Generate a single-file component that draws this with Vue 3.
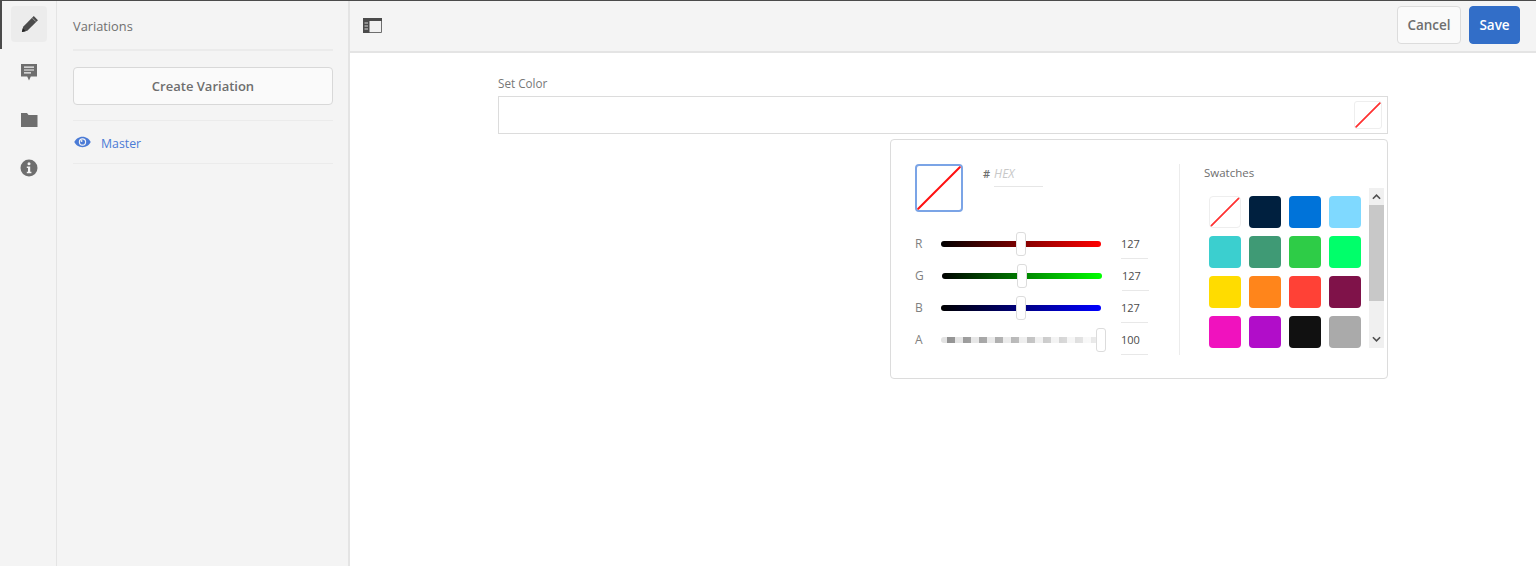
<script setup>
const channels = [
  { label: 'R', value: 127, cls: 'r', pos: 50, nudge: false },
  { label: 'G', value: 127, cls: 'g', pos: 50, nudge: true },
  { label: 'B', value: 127, cls: 'b', pos: 50, nudge: false },
  { label: 'A', value: 100, cls: 'a', pos: 100, nudge: false },
]
const swatches = [
  '', '#00203f', '#0073d9', '#7fd9ff',
  '#3bcfcf', '#3f9a75', '#2ecc47', '#00ff6a',
  '#ffdc00', '#ff851b', '#ff4136', '#7f1249',
  '#f012be', '#b10dc9', '#111111', '#aaaaaa',
]
</script>

<template>
  <div class="app">
    <nav class="rail">
      <div class="rail-item active">
        <svg class="pencil" viewBox="0 0 20 20" width="18" height="18"><path d="M14.2 1.2 18.800 5.800 7 17.600 1 19 2.400 13z" fill="#4b4b4b"/><path d="M12.800 3.600l3.600 3.600" stroke="#ececec" stroke-width=".6"/><path d="M1 19l1-4.200 3.200 3.200z" fill="#222"/></svg>
      </div>
      <div class="rail-item">
        <svg viewBox="0 0 18 18" width="18" height="18"><path d="M1 1h16v12.600h-6.200L9 17.500l-1.800-3.900H1z" fill="#6e6e6e"/><path d="M4 4.200h10M4 7h10M4 9.800h7" stroke="#f4f4f4" stroke-width="1.200"/></svg>
      </div>
      <div class="rail-item">
        <svg viewBox="0 0 18 18" width="18" height="18"><path d="M1 2h6l1.500 2H17.500v12H1z" fill="#6e6e6e"/></svg>
      </div>
      <div class="rail-item">
        <svg viewBox="0 0 18 18" width="18" height="18"><circle cx="9" cy="9" r="8.500" fill="#6e6e6e"/><circle cx="9" cy="4.800" r="1.500" fill="#f4f4f4"/><path d="M6.800 7.400h3.400v5.300h1.200v1.500H6.800v-1.500H8V8.900H6.800z" fill="#f4f4f4"/></svg>
      </div>
    </nav>

    <aside class="side">
      <div class="side-title">Variations</div>
      <div class="side-action">
        <button class="btn create">Create Variation</button>
      </div>
      <div class="variation">
        <svg viewBox="0 0 18 12" width="17" height="12"><path d="M9 .5C5 .5 1.800 3 .3 6c1.500 3 4.700 5.500 8.700 5.500S16.200 9 17.700 6C16.200 3 13 .5 9 .5z" fill="#4b7bd6"/><circle cx="9" cy="6" r="3.900" fill="#f4f4f4"/><circle cx="9" cy="6" r="2.700" fill="#4b7bd6"/><circle cx="8" cy="5" r="1" fill="#f4f4f4"/></svg>
        <span>Master</span>
      </div>
    </aside>

    <main class="main">
      <header class="toolbar">
        <svg class="panel-icon" viewBox="0 0 19 15" width="19" height="15"><path d="M.5.500h18v14H.5z" fill="#f0f0f0" stroke="#6e6e6e"/><path d="M0 0h19v3H0zM0 3h6.500v12H0z" fill="#4b4b4b"/><path d="M1.500 5h3.500M1.500 8h3.500M1.500 11h3.500" stroke="#d8d8d8" stroke-width="1"/></svg>
        <div class="actions">
          <button class="btn cancel">Cancel</button>
          <button class="btn save">Save</button>
        </div>
      </header>

      <section class="form">
        <label class="field-label">Set Color</label>
        <div class="field">
          <span class="swatch-none field-swatch"></span>
        </div>

        <div class="popover">
          <div class="editor">
            <div class="preview-row">
              <span class="preview">
                <svg viewBox="0 0 44 44" width="44" height="44"><path d="M0 44 44 0" stroke="#ff1010" stroke-width="2"/></svg>
              </span>
              <div class="hex">
                <span class="hash">#</span>
                <span class="hex-input">HEX</span>
              </div>
            </div>
            <div class="sliders">
              <div v-for="c in channels" :key="c.label" class="slider-row" :class="{ nudge: c.nudge }">
                <span class="ch-label">{{ c.label }}</span>
                <div class="track-wrap">
                  <div class="track" :class="c.cls"></div>
                  <span class="thumb" :style="{ left: c.pos + '%' }"></span>
                </div>
                <span class="ch-value">{{ c.value }}</span>
              </div>
            </div>
          </div>

          <div class="swatch-panel">
            <div class="swatch-title">Swatches</div>
            <div class="swatch-scroll">
              <div class="swatch-grid">
                <span
                  v-for="(s, i) in swatches"
                  :key="i"
                  class="swatch"
                  :class="{ 'swatch-none': !s }"
                  :style="s ? { background: s } : null"
                ></span>
              </div>
              <div class="scrollbar">
                <svg viewBox="0 0 10 6" width="9" height="6"><path d="M1 5l4-4 4 4" fill="none" stroke="#505050" stroke-width="1.800"/></svg>
                <div class="scroll-thumb"></div>
                <svg class="down" viewBox="0 0 10 6" width="9" height="6"><path d="M1 1l4 4 4-4" fill="none" stroke="#505050" stroke-width="1.800"/></svg>
              </div>
            </div>
          </div>
        </div>
      </section>
    </main>
  </div>
</template>

<style>
html, body { margin: 0; background: #fff; }
</style>

<style scoped>
.app {
  display: flex;
  height: 566px;
  overflow: hidden;
  box-sizing: border-box;
  border-top: 1px solid #4b4b4b;
  font-family: "Open Sans", "Liberation Sans", sans-serif;
  color: #6e6e6e;
  font-size: 12px;
}
.rail {
  width: 57px;
  flex: none;
  box-sizing: border-box;
  background: #f4f4f4;
  border-right: 1px solid #e4e4e4;
  padding: 5px 0 0 11px;
  display: flex;
  flex-direction: column;
  position: relative;
}
.rail::before {
  content: "";
  position: absolute;
  left: 0;
  top: 0;
  width: 2px;
  height: 48px;
  background: #4b4b4b;
}
.rail-item {
  width: 36px;
  height: 36px;
  margin-bottom: 12px;
  border-radius: 4px;
  display: flex;
  align-items: center;
  justify-content: center;
}
.rail-item.active { background: #ececec; }
.pencil { margin-left: 1px; }
.side {
  width: 293px;
  flex: none;
  box-sizing: border-box;
  background: #f4f4f4;
  border-right: 2px solid #e4e4e4;
  padding: 0 15px 0 16px;
}
.side-title {
  height: 48px;
  line-height: 50px;
  border-bottom: 2px solid #ebebeb;
  font-size: 12.800px;
  color: #707070;
}
.side-action {
  padding: 16px 0 15px;
  border-bottom: 1px solid #ebebeb;
}
.btn {
  font-family: inherit;
  font-weight: 600;
  font-size: 13.500px;
  box-sizing: border-box;
  border-radius: 4px;
  cursor: pointer;
  padding: 0;
}
.create {
  display: block;
  width: 100%;
  height: 38px;
  background: #fafafa;
  border: 1px solid #d8d8d8;
  color: #6e6e6e;
  font-size: 13px;
}
.variation {
  height: 42px;
  display: flex;
  align-items: center;
  gap: 10px;
  border-bottom: 1px solid #ebebeb;
  color: #4b7bd6;
  font-size: 12.300px;
  padding-left: 1px;
}
.variation span { padding-top: 2px; }
.main {
  flex: 1;
  min-width: 0;
  background: #fff;
}
.toolbar {
  height: 52px;
  box-sizing: border-box;
  background: #f4f4f4;
  border-bottom: 2px solid #e4e4e4;
  display: flex;
  align-items: center;
  justify-content: space-between;
  padding: 0 16px 0 13px;
}
.panel-icon { margin-bottom: 1px; }
.actions {
  display: flex;
  gap: 8px;
  margin-bottom: 2px;
}
.cancel {
  width: 64px;
  height: 38px;
  background: #fafafa;
  border: 1px solid #dcdcdc;
  color: #6e6e6e;
}
.save {
  width: 51px;
  height: 38px;
  background: #326ec8;
  border: 1px solid #326ec8;
  color: #fff;
}
.form {
  margin-left: 148px;
  width: 890px;
  padding-top: 22px;
}
.field-label {
  display: block;
  height: 21px;
  line-height: 17px;
  font-size: 11.700px;
  color: #777;
}
.field {
  height: 38px;
  box-sizing: border-box;
  border: 1px solid #dcdcdc;
  display: flex;
  align-items: center;
  justify-content: flex-end;
  padding-right: 5px;
}
.swatch-none {
  display: block;
  box-sizing: border-box;
  background: #fff linear-gradient(to bottom right, rgba(255,50,50,0) calc(50% - 1.300px), #ff3232 calc(50% - 0.500px), #ff3232 calc(50% + 0.500px), rgba(255,50,50,0) calc(50% + 1.300px));
}
.field-swatch {
  width: 28px;
  height: 28px;
  border: 1px solid #eee;
  border-radius: 3px;
}
.popover {
  margin: 5px 0 0 392px;
  width: 498px;
  height: 240px;
  box-sizing: border-box;
  background: #fff;
  border: 1px solid #dcdcdc;
  border-radius: 4px;
  display: flex;
  padding: 24px 0 0 24px;
}
.editor {
  width: 265px;
  height: 191px;
  box-sizing: border-box;
  border-right: 1px solid #ececec;
}
.preview-row {
  display: flex;
  height: 48px;
}
.preview {
  display: block;
  width: 48px;
  height: 48px;
  box-sizing: border-box;
  background: #fff;
  border: 2px solid #7ba4e6;
  border-radius: 4px;
  overflow: hidden;
}
.preview svg { display: block; }
.hex {
  margin-left: 20px;
  display: flex;
  align-items: flex-start;
  gap: 4px;
}
.hash {
  font-size: 11px;
  font-weight: 600;
  color: #6e6e6e;
  line-height: 19px;
}
.hex-input {
  width: 49px;
  height: 23px;
  line-height: 19px;
  box-sizing: border-box;
  border-bottom: 1px solid #e6e6e6;
  color: #c8c8c8;
  font-style: italic;
  font-size: 11.800px;
}
.sliders {
  margin-top: 16px;
  display: flex;
  flex-direction: column;
}
.slider-row {
  height: 32px;
  display: flex;
  align-items: center;
}
.ch-label {
  width: 26px;
  font-size: 12px;
  line-height: 14px;
  color: #808080;
}
.track-wrap {
  position: relative;
  width: 160px;
  margin-right: 20px;
  display: flex;
  align-items: center;
  height: 24px;
}
.nudge .track-wrap { margin-left: 1px; margin-right: 19px; }
.track {
  width: 100%;
  height: 6px;
  border-radius: 3px;
}
.track.r { background: linear-gradient(to right, #000, #f00); }
.track.g { background: linear-gradient(to right, #000, #0f0); }
.track.b { background: linear-gradient(to right, #000, #00f); }
.track.a {
  background:
    linear-gradient(to right, rgba(255,255,255,0), rgba(255,255,255,0.850)),
    repeating-linear-gradient(to right, #e2e2e2 0 6px, #8e8e8e 6px 14px, #e2e2e2 14px 16px);
}
.thumb {
  position: absolute;
  top: 0;
  width: 10px;
  height: 24px;
  margin-left: -5px;
  box-sizing: border-box;
  background: #fff;
  border: 1px solid #dcdcdc;
  border-radius: 3px;
}
.ch-value {
  width: 27px;
  height: 29px;
  line-height: 27px;
  box-sizing: border-box;
  border-bottom: 1px solid #e8e8e8;
  font-size: 11px;
  color: #4b4b4b;
}
.nudge .ch-value { margin-left: 1px; margin-right: -1px; }
.swatch-panel {
  margin-left: 24px;
  flex: 1;
  display: flex;
  flex-direction: column;
}
.swatch-title {
  font-size: 11.500px;
  color: #6e6e6e;
  line-height: 17px;
  height: 24px;
}
.swatch-scroll {
  display: flex;
  height: 160px;
}
.swatch-grid {
  display: grid;
  grid-template-columns: repeat(4, 32px);
  grid-auto-rows: 32px;
  gap: 8px;
  padding: 8px 0 0 5px;
}
.swatch {
  border-radius: 4px;
  display: block;
}
.swatch.swatch-none { border: 1px solid #eee; }
.scrollbar {
  margin-left: 8px;
  width: 15px;
  height: 160px;
  background: #f0f0f0;
  display: flex;
  flex-direction: column;
  align-items: center;
}
.scrollbar svg { margin-top: 6px; flex: none; }
.scroll-thumb {
  width: 100%;
  height: 96px;
  margin-top: 5px;
  background: #c8c8c8;
}
.scrollbar .down { margin-top: 35px; }
</style>
